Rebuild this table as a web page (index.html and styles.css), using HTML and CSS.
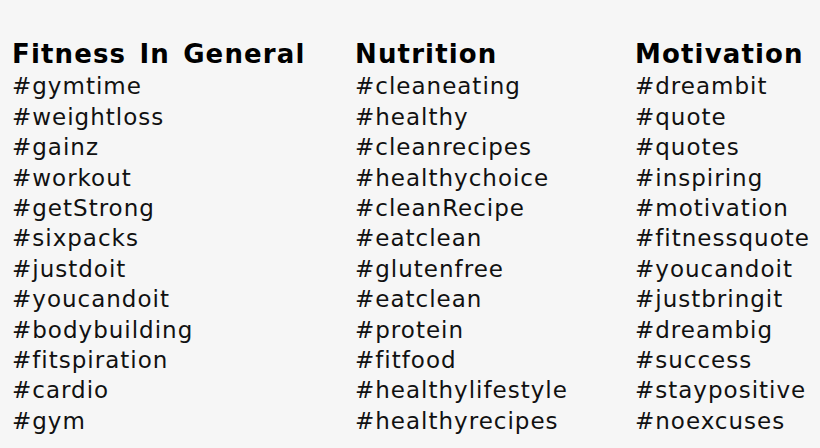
FILE: index.html
```html
<!DOCTYPE html>
<html>
<head>
<meta charset="utf-8">
<link rel="stylesheet" href="styles.css">
</head>
<body>
<div class="sheet">
  <div class="col col-fitness">
    <h2 class="head">Fitness In General</h2>
    <div class="tag">#gymtime</div>
    <div class="tag">#weightloss</div>
    <div class="tag">#gainz</div>
    <div class="tag">#workout</div>
    <div class="tag">#getStrong</div>
    <div class="tag">#sixpacks</div>
    <div class="tag">#justdoit</div>
    <div class="tag">#youcandoit</div>
    <div class="tag">#bodybuilding</div>
    <div class="tag">#fitspiration</div>
    <div class="tag">#cardio</div>
    <div class="tag">#gym</div>
  </div>
  <div class="col col-nutrition">
    <h2 class="head">Nutrition</h2>
    <div class="tag">#cleaneating</div>
    <div class="tag">#healthy</div>
    <div class="tag">#cleanrecipes</div>
    <div class="tag">#healthychoice</div>
    <div class="tag">#cleanRecipe</div>
    <div class="tag">#eatclean</div>
    <div class="tag">#glutenfree</div>
    <div class="tag">#eatclean</div>
    <div class="tag">#protein</div>
    <div class="tag">#fitfood</div>
    <div class="tag">#healthylifestyle</div>
    <div class="tag">#healthyrecipes</div>
  </div>
  <div class="col col-motivation">
    <h2 class="head">Motivation</h2>
    <div class="tag">#dreambit</div>
    <div class="tag">#quote</div>
    <div class="tag">#quotes</div>
    <div class="tag">#inspiring</div>
    <div class="tag">#motivation</div>
    <div class="tag">#fitnessquote</div>
    <div class="tag">#youcandoit</div>
    <div class="tag">#justbringit</div>
    <div class="tag">#dreambig</div>
    <div class="tag">#success</div>
    <div class="tag">#staypositive</div>
    <div class="tag">#noexcuses</div>
  </div>
</div>
</body>
</html>
```
FILE: styles.css
```css
html, body {
  margin: 0;
  padding: 0;
  background: #f6f6f6;
}
body {
  width: 820px;
  height: 448px;
  overflow: hidden;
  font-family: "DejaVu Sans", Verdana, sans-serif;
  color: #111;
}
.sheet {
  display: grid;
  grid-template-columns: 343px 280px 1fr;
  padding: 39px 0 0 12px;
}
.col {
  display: flex;
  flex-direction: column;
}
.head {
  margin: 0 0 2px;
  font-size: 26px;
  font-weight: bold;
  line-height: 30.4px;
  letter-spacing: 1.15px;
  word-spacing: 3px;
  color: #000;
  white-space: nowrap;
}
.tag {
  font-size: 23px;
  line-height: 30.4px;
  letter-spacing: 1px;
  white-space: nowrap;
}
```
